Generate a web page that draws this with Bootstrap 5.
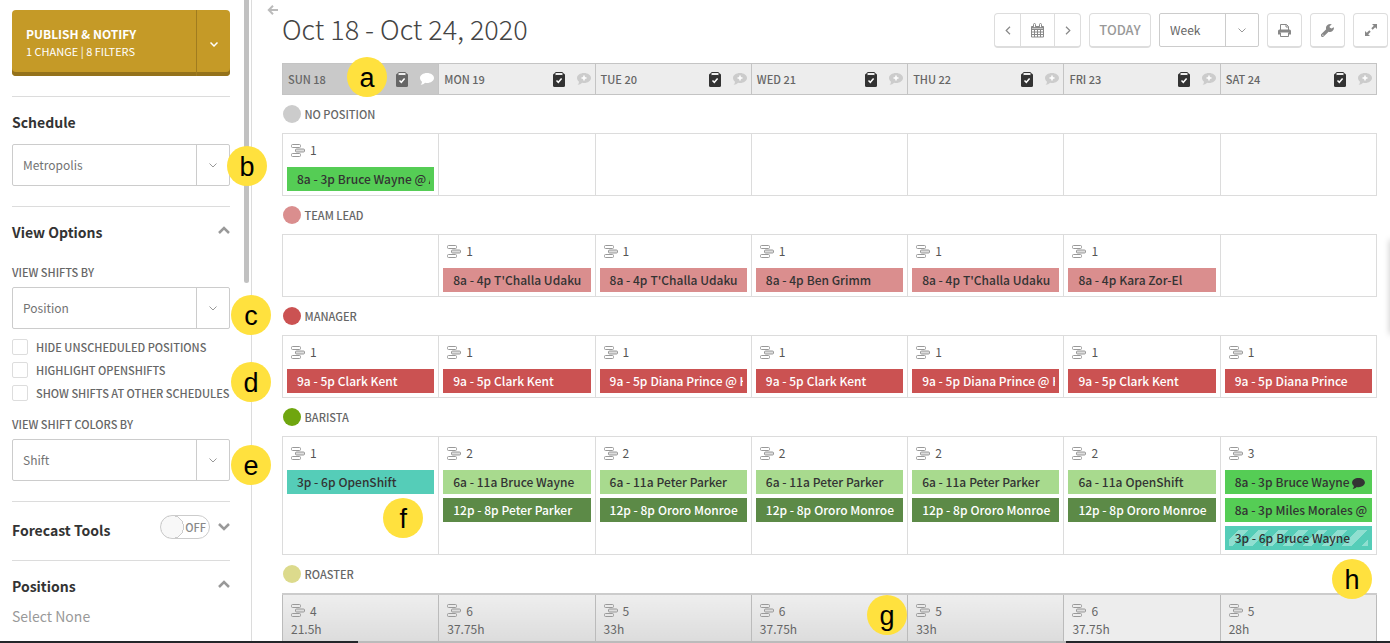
<!DOCTYPE html>
<html lang="en">
<head>
<meta charset="utf-8">
<meta name="viewport" content="width=device-width, initial-scale=1">
<title>Schedule: Oct 18 - Oct 24, 2020</title>
<link href="https://cdn.jsdelivr.net/npm/bootstrap@5.3.0/dist/css/bootstrap.min.css" rel="stylesheet">
<style>
body{font-family:"Noto Sans CJK SC","Open Sans",sans-serif;font-size:12px;line-height:16px;color:#606060;background:#fff}
button,input,select{font-family:inherit}
.side{width:252px;border-right:1px solid #dcdcdc;padding:10px 21px 0 12px}
.thumb{position:absolute;top:0;right:2px;width:5px;height:283px;background:#c1c1c1;border-radius:0 0 3px 3px}
.publish{background:#c59a27;border-radius:4px;box-shadow:inset 0 -4px #94721b;height:66px;color:#fff}
.publish button{color:#fff;background:none;border:0}
.publish-main{padding:0 14px 2px;font-size:11px}
.publish-main strong{font-size:12px;font-weight:700;line-height:18px}
.publish-menu{width:34px;border-left:1px solid #a07c1f!important}
.block{border-top:1px solid #dcdcdc;margin-top:20px;padding-top:13px}
.heading{font-size:14px;line-height:24px;font-weight:700;color:#333;margin:0}
.sched .heading{margin-bottom:10px}
.caps{font-size:11px;line-height:16px;font-weight:500;color:#666}
.caps[for]{margin-bottom:7px}
.first{margin-top:20px}
.picker{appearance:none;border:1px solid #ccc;border-radius:2px;color:#737373;font-size:12px;padding:0 40px 0 10px;height:42px;width:100%;
 background:linear-gradient(#ccc,#ccc) right 32px top/1px 100% no-repeat,
 url("data:image/svg+xml,%3Csvg xmlns='http://www.w3.org/2000/svg' width='8' height='5' fill='none' stroke='%23999'%3E%3Cpath d='M.5.5 4 4 7.5.5'/%3E%3C/svg%3E") right 12px center no-repeat #fff}
.picker-sm{width:100px;height:34px;color:#666}
.tick{appearance:none;width:16px;height:16px;border:1px solid #ddd;border-radius:2px;margin:0;background:#fff}
.tick:checked{background:#888}
.ticks{row-gap:7px;padding:10px 0 15px}
.ticks label{height:16px;column-gap:8px}
.forecast{height:59px}
.forecast .heading{padding-top:3px}
.forecast .plain{margin-top:8px}
.forecast+.block{margin-top:0}
.toggle{appearance:none;width:50px;height:24px;border:1px solid #ccc;border-radius:12px;margin:0;display:block;
 background:radial-gradient(circle at 11px 11px,#f8f8f8 11px,#ccc 11px,#ccc 12px,#fff 12px)}
.toggle-text{position:absolute;right:4px;top:4px;font-size:11px;line-height:16px;color:#888;font-weight:500;pointer-events:none}
.none{font-size:14px;line-height:20px;color:#999;margin-top:8px}
.plain{border:0;background:none;padding:0;display:flex;color:#999}
.gutter{width:30px;padding:5px 0 0 15px}
.board{padding-right:13px}
.topbar{height:63px;padding-top:13px;margin-right:-11px}
.title{font-size:27px;line-height:32px;font-weight:300;color:#444;margin:0}
.tool{border:1px solid #ddd;border-bottom-width:2px;border-radius:4px;background:#fff;height:35px;width:35px;padding:0;color:#888;display:flex;align-items:center;justify-content:center;font-size:13px;font-weight:500}
.tool-today{width:62px;color:#999}
.tool-group .tool{border-radius:0;margin-left:-1px}
.tool-group .tool:first-child{border-radius:4px 0 0 4px;width:27px;margin-left:0}
.tool-group .tool:last-child{border-radius:0 4px 4px 0;width:27px}
.tool-group .tool:nth-child(2){width:35px}
.cal{table-layout:fixed;width:100%;border-collapse:collapse}
.cal thead th{background:#ededed;border:1px solid #c4c4c4;height:31px;padding:0 4px 0 5px;font-size:11px;font-weight:500;color:#666;position:relative}
.cal thead th.today{background:#c9c9c9}
.cal .group th{height:39px;padding:0;font-size:11px;font-weight:500;color:#666}
.dot{width:18px;height:18px;border-radius:50%;margin-right:4px}
.cal tbody td{border:1px solid #dcdcdc;height:62px;padding:0 4px 4px;vertical-align:top;position:relative}
.count{height:33px;padding:0 0 1px 4px;column-gap:5px;color:#555;font-size:12px}
.shift{height:24px;line-height:24px;padding:0 0 0 10px;border-right:4px solid;font-size:12px;font-weight:500;color:#333;white-space:nowrap;overflow:hidden;margin-top:4px}
.count+.shift{margin-top:0}
.shift b{font-weight:500;margin-right:3px}
.s-green{background:#55cd55;border-color:#55cd55}
.s-rose{background:#da8e8e;border-color:#da8e8e}
.s-red{background:#cb5252;border-color:#cb5252;color:#fff}
.s-teal{background:#55cdb8;border-color:#55cdb8}
.s-light{background:#a8da8e;border-color:#a8da8e}
.s-dark{background:#5c8a47;border-color:#5c8a47;color:#fff}
.s-stripe{background:repeating-linear-gradient(135deg,#55cdb8 0 7px,#8fdfd0 7px 14px) content-box,#55cdb8;padding:4px 0 4px 4px;line-height:16px;text-indent:6px}
.cal tfoot td{border:1px solid #bbb;border-top:2px solid #ccc;background:#ededed;height:48px;padding:7px 4px 0 8px;vertical-align:top;line-height:18px;color:#666;position:relative}
.cal tfoot td.shade{background:linear-gradient(#eee,#dcdcdc)}
.cal tfoot .d-flex{column-gap:5px}
.pin{position:absolute;width:40px;height:40px;border-radius:50%;background:#ffe13e;color:#000;font:27px/42px "Liberation Sans",sans-serif;text-align:center;z-index:5}
.pin-side{left:219px;top:8px}
.pin-sched{left:215px;top:2px}
.pin-show{left:219px;bottom:-1px}
.pin-select{left:219px;top:6px}
.pin-day{left:64px;top:-7px}
.pin-open{right:15px;bottom:16px}
.pin-sat{right:4px;bottom:-45px}
.pin-total{right:0;top:0}
.edge{height:2px;background:linear-gradient(90deg,#24262a 358px,#bbb 358px,#bbb 1066px,#24262a 1066px)}
.drawer{position:fixed;right:-4px;top:240px;width:4px;height:94px;box-shadow:0 0 6px #bbb}
</style>
</head>
<body>
<svg class="d-none">
<symbol id="rows" viewBox="0 0 14 13"><g fill="none" stroke="#999"><rect x=".5" y=".5" width="9" height="3" rx="1"/><rect x="4.500" y="5" width="9" height="3" rx="1" fill="#ddd"/><rect x=".5" y="9.500" width="9" height="3" rx="1"/></g></symbol>
<symbol id="clip" viewBox="0 0 12 15"><rect y="1.500" width="12" height="13.500" rx="1.500" fill="currentColor"/><rect x="2" y=".5" width="8" height="3" rx="1" fill="#eee" stroke="currentColor"/><path d="M3.500 8.500 5.300 10.300 8.600 6.600" fill="none" stroke="#fff" stroke-width="1.500"/></symbol>
<symbol id="talk" viewBox="0 0 14 12"><path d="M7 0c3.900 0 7 2.200 7 5s-3.100 5-7 5c-.7 0-1.300-.1-1.900-.2C4 10.900 2.500 11.700.6 11.900c.9-.9 1.300-1.900 1.400-3.100C.8 7.900 0 6.500 0 5c0-2.800 3.100-5 7-5z" fill="currentColor"/></symbol>
<symbol id="talkplus" viewBox="0 0 14 12"><path d="M7 0c3.900 0 7 2.200 7 5s-3.100 5-7 5c-.7 0-1.300-.1-1.900-.2C4 10.900 2.500 11.700.6 11.900c.9-.9 1.300-1.900 1.400-3.100C.8 7.900 0 6.500 0 5c0-2.800 3.100-5 7-5z" fill="currentColor"/><path d="M7 2.500v5M4.500 5h5" stroke="#fff" stroke-width="1.500"/></symbol>
<symbol id="up" viewBox="0 0 12 8"><path d="M1 7 6 2l5 5" fill="none" stroke="currentColor" stroke-width="2.500"/></symbol>
<symbol id="down" viewBox="0 0 12 8"><path d="M1 1l5 5 5-5" fill="none" stroke="currentColor" stroke-width="2.500"/></symbol>
</svg>
<div class="d-flex vh-100 overflow-hidden">
<aside class="side flex-shrink-0 position-relative">
  <div class="thumb"></div>
  <div class="publish d-flex">
    <button class="publish-main flex-grow-1 text-start"><strong class="d-block">PUBLISH &amp; NOTIFY</strong>1 CHANGE | 8 FILTERS</button>
    <button class="publish-menu p-0" aria-label="Publish options"><svg width="8" height="5" fill="none" stroke="#fff" stroke-width="1.500"><path d="M.5.5 4 4 7.500.5"/></svg></button>
  </div>
  <section class="block sched">
    <label class="heading d-block" for="sched">Schedule</label>
    <div class="position-relative"><select class="picker" id="sched"><option>Metropolis</option></select><span class="pin pin-sched">b</span></div>
  </section>
  <section class="block">
    <div class="d-flex justify-content-between align-items-center"><h2 class="heading">View Options</h2><button class="plain pb-1" aria-label="Collapse view options"><svg width="12" height="8"><use href="#up"/></svg></button></div>
    <label class="caps d-block first" for="by">VIEW SHIFTS BY</label>
    <div class="position-relative"><select class="picker" id="by"><option>Position</option></select><span class="pin pin-side">c</span></div>
    <div class="ticks d-flex flex-column">
      <label class="caps d-flex text-nowrap"><input class="tick" type="checkbox">HIDE UNSCHEDULED POSITIONS</label>
      <label class="caps d-flex text-nowrap"><input class="tick" type="checkbox">HIGHLIGHT OPENSHIFTS</label>
      <label class="caps d-flex text-nowrap position-relative"><input class="tick" type="checkbox">SHOW SHIFTS AT OTHER SCHEDULES<span class="pin pin-show">d</span></label>
    </div>
    <label class="caps d-block" for="colors">VIEW SHIFT COLORS BY</label>
    <div class="position-relative"><select class="picker" id="colors"><option>Shift</option></select><span class="pin pin-select">e</span></div>
  </section>
  <section class="block forecast d-flex align-items-start">
    <h2 class="heading flex-grow-1">Forecast Tools</h2>
    <label class="position-relative me-2"><input class="toggle" type="checkbox" aria-label="Forecast tools"><span class="toggle-text">OFF</span></label>
    <button class="plain" aria-label="Expand forecast tools"><svg width="12" height="8"><use href="#down"/></svg></button>
  </section>
  <section class="block">
    <div class="d-flex justify-content-between align-items-center"><h2 class="heading">Positions</h2><button class="plain pb-1" aria-label="Collapse positions"><svg width="12" height="8"><use href="#up"/></svg></button></div>
    <a href="#" class="none text-decoration-none d-block">Select None</a>
  </section>
</aside>
<div class="gutter flex-shrink-0"><button class="plain" aria-label="Hide sidebar"><svg width="11" height="10" fill="none" stroke="#bbb" stroke-width="2"><path d="M11 5H2M6 .8 1.800 5 6 9.200"/></svg></button></div>
<main class="board flex-grow-1">
  <header class="topbar d-flex justify-content-between align-items-start">
    <h1 class="title">Oct 18 - Oct 24, 2020</h1>
    <div class="d-flex gap-2">
      <div class="tool-group d-flex">
        <button class="tool" aria-label="Previous"><svg width="6" height="9" fill="none" stroke="#888" stroke-width="1.200"><path d="M5 .8 1.200 4.500 5 8.200"/></svg></button>
        <button class="tool" aria-label="Calendar"><svg width="13" height="15" fill="none" stroke="#888"><path d="M.5 3.500h12v10.500H.5zM.5 6.500h12M.5 9h12M.5 11.500h12M3.500 6.500v7.500M6.500 6.500v7.500M9.500 6.500v7.500"/><path d="M.5 4.500h12" stroke-width="2"/><rect x="2.500" y=".5" width="2" height="4" rx="1" fill="#fff"/><rect x="8.500" y=".5" width="2" height="4" rx="1" fill="#fff"/></svg></button>
        <button class="tool" aria-label="Next"><svg width="6" height="9" fill="none" stroke="#888" stroke-width="1.200"><path d="M1 .8 4.800 4.500 1 8.200"/></svg></button>
      </div>
      <button class="tool tool-today">TODAY</button>
      <select class="picker picker-sm" aria-label="Range"><option>Week</option></select>
      <button class="tool" aria-label="Print"><svg width="13" height="13"><path d="M2.500 6V.5H8.500l2 2V6" fill="none" stroke="#888"/><path d="M8 .5v2.500h2.500" fill="none" stroke="#888"/><path d="M1.500 5.500h10A1.500 1.500 0 0 1 13 7v3.500h-2.500V8.500h-8v2H0V7a1.500 1.500 0 0 1 1.500-1.500z" fill="#888"/><path d="M2.500 9v3.500h8V9" fill="none" stroke="#888"/></svg></button>
      <button class="tool" aria-label="Settings"><svg width="13" height="13"><path d="M12.700 3.200 10.500 4.500 8.700 3.500V2L10.800.5C10.300.2 9.700 0 9 0a4 4 0 0 0-3.800 5.300L.4 10.100a1.400 1.400 0 0 0 2.300 2.400L7.600 7.700A4 4 0 0 0 13 4.100c0-.3-.1-.6-.3-.9z" fill="#888"/><circle cx="1.900" cy="11.200" r=".6" fill="#fff"/></svg></button>
      <button class="tool" aria-label="Full screen"><svg width="12" height="12" fill="#888"><path d="M7 0h5v5L10.200 3.200 7.700 5.700 6.300 4.300 8.800 1.800zM0 12V7l1.800 1.800 2.500-2.500 1.400 1.400-2.500 2.500L5 12z"/></svg></button>
    </div>
  </header>
  <table class="cal">
    <thead><tr id="days"></tr></thead>
    <tbody id="body"></tbody>
    <tfoot><tr id="totals"></tr></tfoot>
  </table>
</main>
</div>
<div class="drawer"></div>
<div class="edge fixed-bottom"></div>
<script src="https://cdn.jsdelivr.net/npm/bootstrap@5.3.0/dist/js/bootstrap.bundle.min.js"></script>
<script>
const icon = (id, w, h, color) => `<svg width="${w}" height="${h}" color="${color || '#999'}" class="flex-shrink-0"><use href="#${id}"/></svg>`;
const pin = (letter, cls) => `<span class="pin ${cls}">${letter}</span>`;
const days = ['SUN 18', 'MON 19', 'TUE 20', 'WED 21', 'THU 22', 'FRI 23', 'SAT 24'];
document.getElementById('days').innerHTML = days.map((d, i) =>
  `<th scope="col" class="${i ? '' : 'today'}"><div class="d-flex align-items-center"><span class="flex-grow-1">${d}</span>` +
  icon('clip', 12, 15, i ? '#333' : '#666') + '<span class="ps-2 ms-1 d-flex">' +
  (i ? icon('talkplus', 14, 12, '#ccc') : icon('talk', 14, 12, '#fff')) + `</span></div>${i ? '' : pin('a', 'pin-day')}</th>`).join('');

// Each shift is [style, time, name]; an empty list is an empty day.
const rose = n => [['rose', '8a - 4p', n]];
const red = n => [['red', '9a - 5p', n]];
const pair = (a, b) => [['light', '6a - 11a', a], ['dark', '12p - 8p', b]];
const groups = [
  ['NO POSITION', '#ccc', [[['green', '8a - 3p', 'Bruce Wayne @ A']], [], [], [], [], [], []]],
  ['TEAM LEAD', '#da8e8e', [[], rose("T'Challa Udaku"), rose("T'Challa Udaku"), rose('Ben Grimm'), rose("T'Challa Udaku"), rose('Kara Zor-El'), []]],
  ['MANAGER', '#cb5252', [red('Clark Kent'), red('Clark Kent'), red('Diana Prince @ H'), red('Clark Kent'), red('Diana Prince @ H'), red('Clark Kent'), red('Diana Prince')]],
  ['BARISTA', '#6fa60f', [[['teal', '3p - 6p', 'OpenShift']], pair('Bruce Wayne', 'Peter Parker'), pair('Peter Parker', 'Ororo Monroe'), pair('Peter Parker', 'Ororo Monroe'), pair('Peter Parker', 'Ororo Monroe'), pair('OpenShift', 'Ororo Monroe'),
    [['green', '8a - 3p', 'Bruce Wayne ' + icon('talk', 13, 11, '#333')], ['green', '8a - 3p', 'Miles Morales @ A'], ['teal s-stripe', '3p - 6p', 'Bruce Wayne']]]],
  ['ROASTER', '#dcda8c', []]
];
document.getElementById('body').innerHTML = groups.map(([name, color, cells]) =>
  `<tr class="group"><th colspan="7" scope="rowgroup"><div class="d-flex align-items-center"><span class="dot" style="background:${color}"></span>${name}</div></th></tr>` +
  (cells.length ? '<tr>' + cells.map((list, i) => '<td>' +
    (list.length ? `<div class="count d-flex align-items-center">${icon('rows', 14, 13)}${list.length}</div>` : '') +
    list.map(([s, t, n]) => `<div class="shift s-${s}"><b>${t}</b>${n}</div>`).join('') +
    (name === 'BARISTA' && i === 0 ? pin('f', 'pin-open') : '') +
    (name === 'BARISTA' && i === 6 ? pin('h', 'pin-sat') : '') + '</td>').join('') + '</tr>' : '')).join('');

const totals = [[4, '21.5h'], [6, '37.75h'], [5, '33h'], [6, '37.75h'], [5, '33h'], [6, '37.75h'], [5, '28h']];
document.getElementById('totals').innerHTML = totals.map(([n, h], i) =>
  `<td class="${i < 5 ? 'shade' : ''}"><div class="d-flex align-items-center">${icon('rows', 14, 13)}${n}</div>${h}${i === 3 ? pin('g', 'pin-total') : ''}</td>`).join('');
</script>
</body>
</html>
